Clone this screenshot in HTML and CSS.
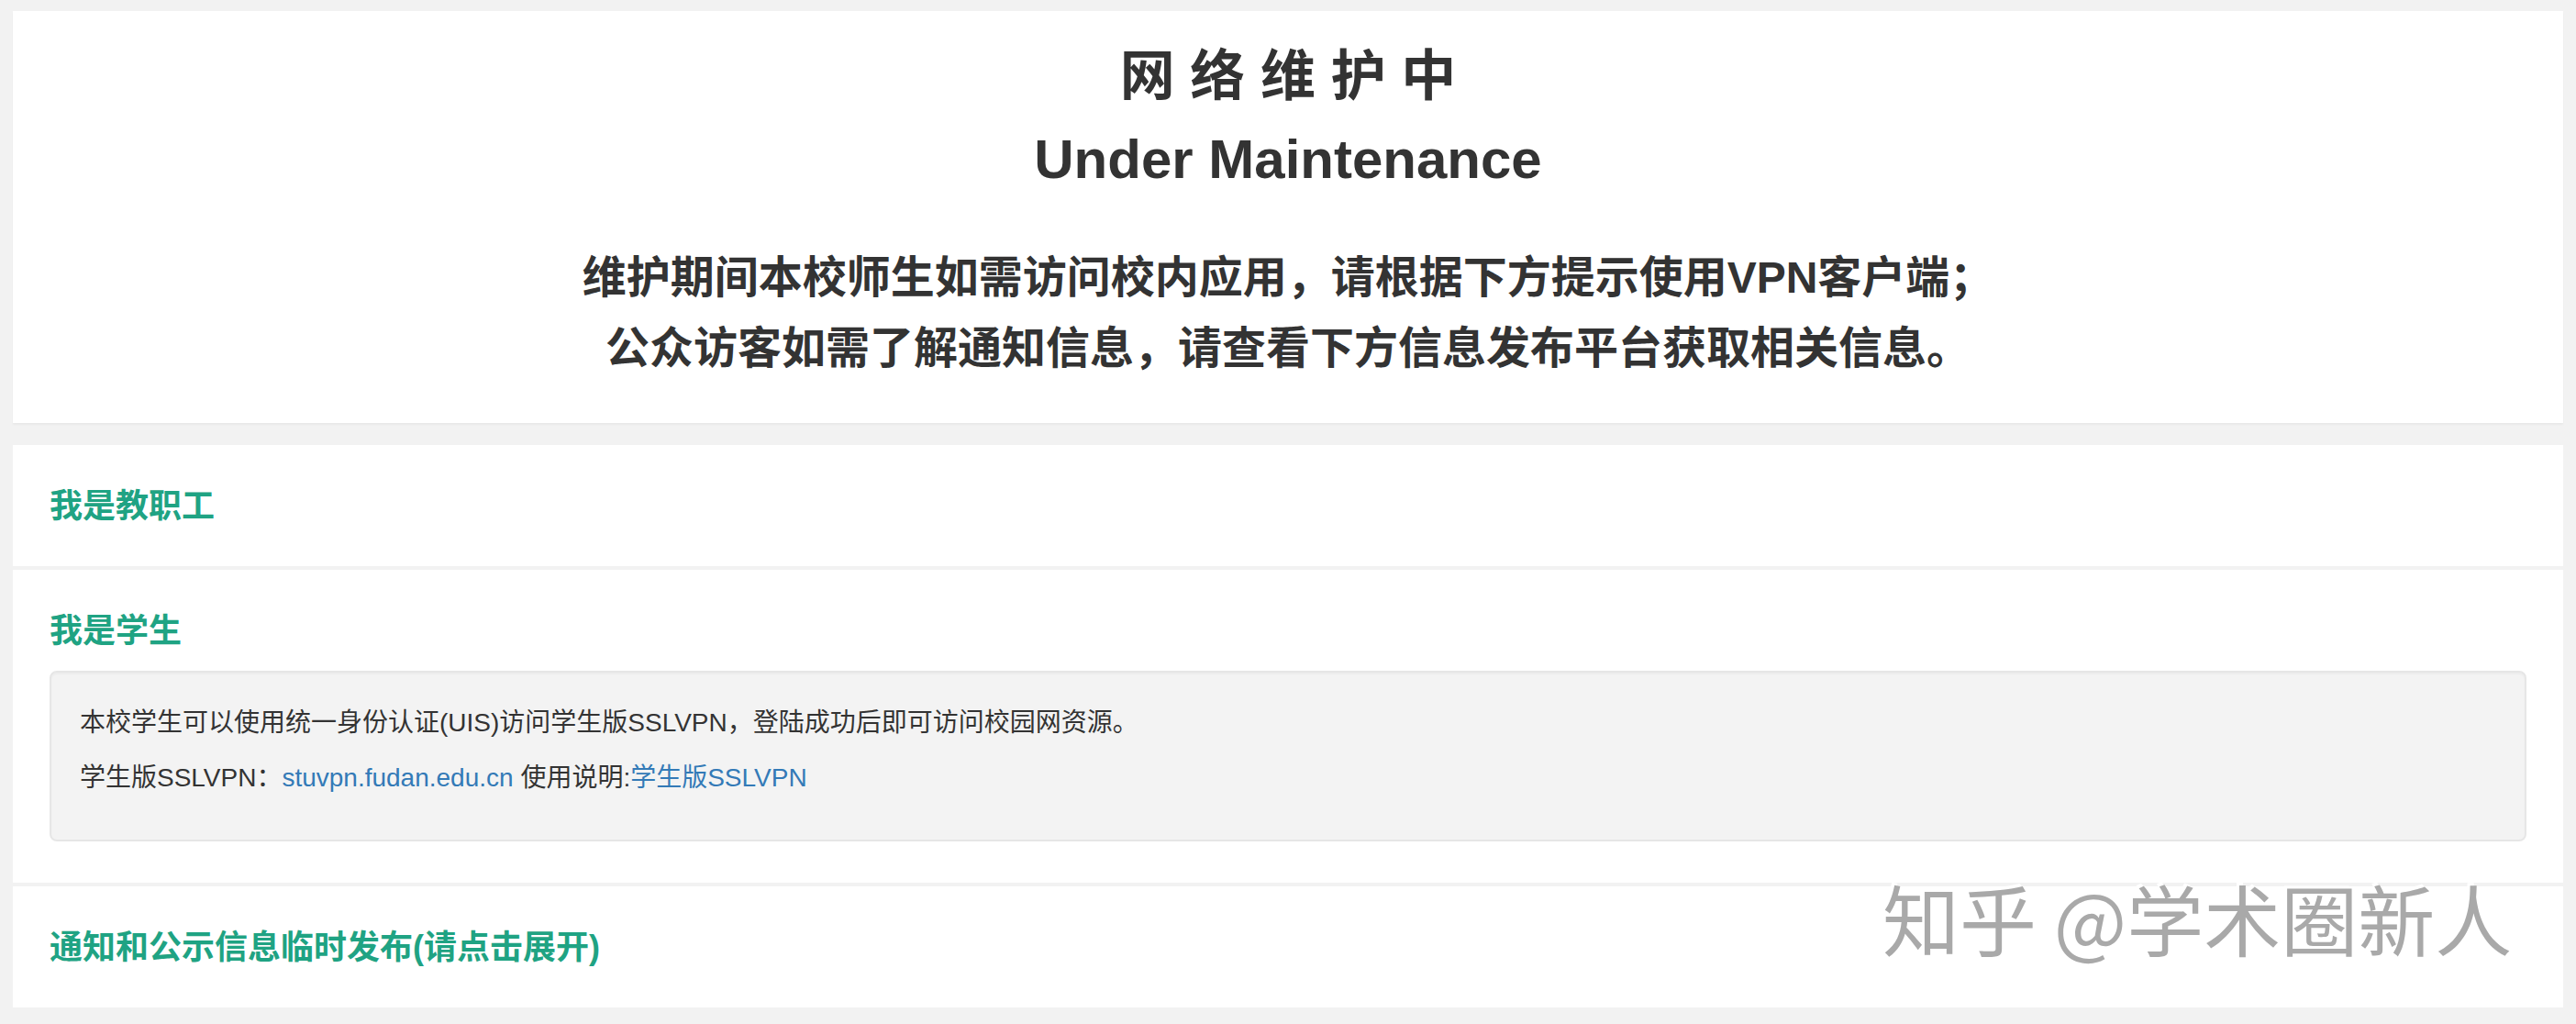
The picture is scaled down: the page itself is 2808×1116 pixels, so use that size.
FILE: index.html
```html
<!DOCTYPE html>
<html lang="zh-CN">
<head>
<meta charset="utf-8">
<title>网络维护中 Under Maintenance</title>
<link rel="stylesheet" href="styles.css">
</head>
<body>

    <div class="aviso">
        <h1>网 络 维 护 中<br/>Under Maintenance</h1>
        <p>维护期间本校师生如需访问校内应用，请根据下方提示使用VPN客户端；<br/>
        公众访客如需了解通知信息，请查看下方信息发布平台获取相关信息。</p>
    </div>

    <div class="grupo">
        <div class="painel">
            <h4 class="titulo">我是教职工</h4>
        </div>

        <div class="painel">
            <h4 class="titulo">我是学生</h4>
            <div class="well">
                <p>本校学生可以使用统一身份认证(UIS)访问学生版SSLVPN，登陆成功后即可访问校园网资源。</p>
                <p>学生版SSLVPN：<a href="#">stuvpn.fudan.edu.cn</a> 使用说明:<a href="#">学生版SSLVPN</a></p>
            </div>
        </div>

        <div class="painel">
            <h4 class="titulo">通知和公示信息临时发布(请点击展开)</h4>
        </div>
    </div>

    <!-- marca d'agua por cima do ultimo painel -->
    <div class="marca">知乎 @学术圈新人</div>

</body>
</html>
```

FILE: styles.css
```css
body{
    margin: 0;
    padding: 12px 14px 20px;
    background-color: #f2f2f2;
    font-family: "Liberation Sans", "Noto Sans CJK SC", sans-serif;
    color: #333;
}

.aviso{
    background-color: #fff;
    text-align: center;
    padding: 27px 20px 43px;
    box-shadow: 0 2px 2px rgba(0,0,0,0.04);
}

.aviso h1{
    margin: 0;
    font-size: 60px;
    line-height: 90px;
    font-weight: bold;
}

.aviso p{
    margin: 45px 0 0;
    font-size: 48px;
    line-height: 77px;
    font-weight: bold;
}

.grupo{
    margin-top: 24px;
    display: flex;
    flex-direction: column;
    gap: 4px;
}

.painel{
    background-color: #fff;
    padding: 47px 40px 45px;
}

.titulo{
    margin: 0;
    font-size: 36px;
    line-height: 40px;
    font-weight: bold;
    color: #1fa383;
}

.well{
    margin-top: 23px;
    background-color: #f3f3f3;
    border: 2px solid #e6e6e6;
    border-radius: 8px;
    padding: 35px 31px 27px;
    box-shadow: inset 0 2px 2px rgba(0,0,0,0.03);
}

.well p{
    margin: 0 0 20px;
    font-size: 28px;
    line-height: 40px;
}

.well a{
    color: #337ab7;
    text-decoration: none;
}

.marca{
    position: absolute;
    left: 2052px;
    top: 952px;
    font-family: "Noto Sans CJK SC", sans-serif;
    font-size: 84px;
    line-height: 96px;
    color: #a9a9a9;
    text-shadow: -3px -3px 0 #fff;
    white-space: nowrap;
}
```
